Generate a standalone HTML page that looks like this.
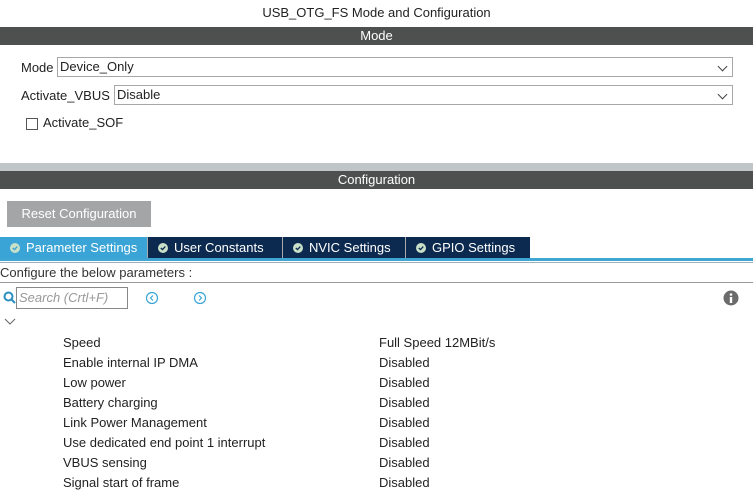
<!DOCTYPE html>
<html><head><style>
body{margin:0;width:753px;height:501px;background:#fff;font-family:"Liberation Sans",sans-serif;font-size:13px;color:#222;position:relative;overflow:hidden}
.a{position:absolute}
.bar{position:absolute;left:0;width:753px;height:18px;background:#4e504f;color:#fff;text-align:center;line-height:18px;font-size:13px}
.sel{position:absolute;height:20px;border:1px solid #a8a8a8;box-sizing:border-box;line-height:18px;padding-left:2px;background:#fff}
.chev{position:absolute;right:6px;top:5px;width:6px;height:6px;border-right:1px solid #444;border-bottom:1px solid #444;transform:rotate(45deg)}
.tab{position:absolute;top:237px;height:21px;background:#0c2a4f;color:#fff;line-height:21px;font-size:13px;box-sizing:border-box;padding-left:10px}
.tab svg{vertical-align:-1px;margin-right:6px}
.row{position:absolute;left:63px;font-size:13px}
.val{position:absolute;left:379px;font-size:13px}
</style></head><body>
<div class="a" style="left:0;width:753px;top:5px;text-align:center">USB_OTG_FS Mode and Configuration</div>
<div class="bar" style="top:27px">Mode</div>
<div class="a" style="left:21px;top:60px">Mode</div>
<div class="sel" style="left:57px;top:57px;width:676px">Device_Only<span class="chev"></span></div>
<div class="a" style="left:21px;top:88px">Activate_VBUS</div>
<div class="sel" style="left:114px;top:85px;width:619px">Disable<span class="chev"></span></div>
<div class="a" style="left:26px;top:118px;width:10px;height:10px;border:1px solid #555"></div>
<div class="a" style="left:43px;top:115px">Activate_SOF</div>
<div class="a" style="left:0;top:163px;width:753px;height:8px;background:#c0c5c7"></div>
<div class="bar" style="top:171px">Configuration</div>
<div class="a" style="left:7px;top:201px;width:144px;height:26px;background:#a3a5a7;color:#fff;text-align:center;line-height:26px">Reset Configuration</div>
<div class="tab" style="left:0;width:147px;background:#3aa4d6"><svg width="10" height="10"><circle cx="5" cy="5" r="5" fill="#c8e0c8"/><path d="M2.8 5L4.5 6.6L7.3 3.6" fill="none" stroke="#3aa4d6" stroke-width="1.3"/></svg>Parameter Settings</div>
<div class="tab" style="left:147px;width:135px;border-left:1px solid #aaa"><svg width="10" height="10"><circle cx="5" cy="5" r="5" fill="#c8e0c8"/><path d="M2.8 5L4.5 6.6L7.3 3.6" fill="none" stroke="#0c2a4f" stroke-width="1.3"/></svg>User Constants</div>
<div class="tab" style="left:282px;width:123px;border-left:1px solid #aaa"><svg width="10" height="10"><circle cx="5" cy="5" r="5" fill="#c8e0c8"/><path d="M2.8 5L4.5 6.6L7.3 3.6" fill="none" stroke="#0c2a4f" stroke-width="1.3"/></svg>NVIC Settings</div>
<div class="tab" style="left:405px;width:125px;border-left:1px solid #aaa"><svg width="10" height="10"><circle cx="5" cy="5" r="5" fill="#c8e0c8"/><path d="M2.8 5L4.5 6.6L7.3 3.6" fill="none" stroke="#0c2a4f" stroke-width="1.3"/></svg>GPIO Settings</div>
<div class="a" style="left:0;top:258px;width:753px;height:3px;background:#3fa5d2"></div>
<div class="a" style="left:0;top:262px;width:753px;height:1px;background:#9fb0b8"></div>
<div class="a" style="left:0;top:265px;color:#333">Configure the below parameters :</div>
<div class="a" style="left:0;top:282px;width:753px;height:1px;background:#999"></div>
<svg class="a" style="left:3px;top:291px" width="14" height="14"><circle cx="5.5" cy="5.5" r="4" fill="none" stroke="#2a8fc0" stroke-width="2"/><line x1="8.5" y1="8.5" x2="12" y2="12" stroke="#2a8fc0" stroke-width="2"/></svg>
<div class="a" style="left:16px;top:287px;width:108px;height:20px;border:1px solid #888;color:#999;font-style:italic;line-height:20px;padding-left:2px">Search (Crtl+F)</div>
<svg class="a" style="left:145px;top:291px" width="14" height="14"><circle cx="7" cy="7" r="5.5" fill="none" stroke="#3aa4d6" stroke-width="1.2"/><path d="M8 4.5L5.5 7L8 9.5" fill="none" stroke="#3aa4d6" stroke-width="1.2"/></svg>
<svg class="a" style="left:193px;top:291px" width="14" height="14"><circle cx="7" cy="7" r="5.5" fill="none" stroke="#3aa4d6" stroke-width="1.2"/><path d="M6 4.5L8.5 7L6 9.5" fill="none" stroke="#3aa4d6" stroke-width="1.2"/></svg>
<svg class="a" style="left:723px;top:290px" width="16" height="16"><circle cx="8" cy="8" r="7.5" fill="#6b6b6b"/><circle cx="8" cy="4.5" r="1.3" fill="#fff"/><rect x="6.8" y="7" width="2.4" height="6" fill="#fff"/></svg>
<svg class="a" style="left:4px;top:318px" width="12" height="8"><path d="M1 1L6 6L11 1" fill="none" stroke="#666"/></svg>
<div class="row" style="top:335px">Speed</div><div class="val" style="top:335px">Full Speed 12MBit/s</div>
<div class="row" style="top:355px">Enable internal IP DMA</div><div class="val" style="top:355px">Disabled</div>
<div class="row" style="top:375px">Low power</div><div class="val" style="top:375px">Disabled</div>
<div class="row" style="top:395px">Battery charging</div><div class="val" style="top:395px">Disabled</div>
<div class="row" style="top:415px">Link Power Management</div><div class="val" style="top:415px">Disabled</div>
<div class="row" style="top:435px">Use dedicated end point 1 interrupt</div><div class="val" style="top:435px">Disabled</div>
<div class="row" style="top:455px">VBUS sensing</div><div class="val" style="top:455px">Disabled</div>
<div class="row" style="top:475px">Signal start of frame</div><div class="val" style="top:475px">Disabled</div>
</body></html>
